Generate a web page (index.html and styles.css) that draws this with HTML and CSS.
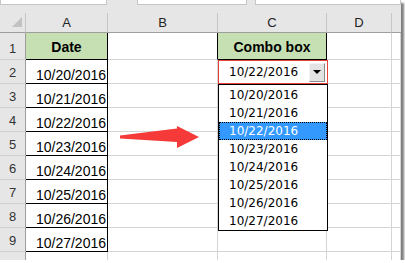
FILE: index.html
```html
<!DOCTYPE html>
<html lang="en">
<head>
  <meta charset="UTF-8">
  <meta name="viewport" content="width=device-width, initial-scale=1.0">
  <title>Combo box from date list</title>

  <!-- Sheet styles -->
  <link rel="stylesheet" href="styles.css">
</head>
<body>
  <div class="window">
    <!-- Name box / formula bar, cut off at the top -->
    <div class="formula-bar">
      <span class="field name-box"></span>
      <span class="field fx-box"></span>
      <span class="field input-box"></span>
    </div>

    <div class="sheet">
      <!-- Column headers -->
      <div class="corner">
        <svg width="26" height="20" viewBox="0 0 26 20"><polygon points="22,4 22,14 12,14" fill="#c2c2c2"/></svg>
      </div>
      <div class="col-head">A</div>
      <div class="col-head">B</div>
      <div class="col-head">C</div>
      <div class="col-head">D</div>
      <div class="col-head last"></div>

      <!-- Row 1 -->
      <div class="row-head">1</div>
      <div class="cell title boxed">Date</div>
      <div class="cell edge-right"></div>
      <div class="cell title boxed">Combo box</div>
      <div class="cell"></div>
      <div class="cell"></div>

      <!-- Rows 2 - 9 -->
      <div class="row-head">2</div>
      <div class="cell date boxed">10/20/2016</div>
      <div class="cell"></div><div class="cell"></div><div class="cell"></div><div class="cell"></div>

      <div class="row-head">3</div>
      <div class="cell date boxed">10/21/2016</div>
      <div class="cell"></div><div class="cell"></div><div class="cell"></div><div class="cell"></div>

      <div class="row-head">4</div>
      <div class="cell date boxed">10/22/2016</div>
      <div class="cell"></div><div class="cell"></div><div class="cell"></div><div class="cell"></div>

      <div class="row-head">5</div>
      <div class="cell date boxed">10/23/2016</div>
      <div class="cell"></div><div class="cell"></div><div class="cell"></div><div class="cell"></div>

      <div class="row-head">6</div>
      <div class="cell date boxed">10/24/2016</div>
      <div class="cell"></div><div class="cell"></div><div class="cell"></div><div class="cell"></div>

      <div class="row-head">7</div>
      <div class="cell date boxed">10/25/2016</div>
      <div class="cell"></div><div class="cell"></div><div class="cell"></div><div class="cell"></div>

      <div class="row-head">8</div>
      <div class="cell date boxed">10/26/2016</div>
      <div class="cell"></div><div class="cell"></div><div class="cell"></div><div class="cell"></div>

      <div class="row-head">9</div>
      <div class="cell date boxed">10/27/2016</div>
      <div class="cell"></div><div class="cell"></div><div class="cell"></div><div class="cell"></div>

      <div class="row-head">10</div>
      <div class="cell"></div><div class="cell"></div><div class="cell"></div><div class="cell"></div><div class="cell"></div>

      <!-- Combo box control over C2 -->
      <div class="combo">
        <span class="combo-value">10/22/2016</span>
        <span class="combo-button"><span class="caret"></span></span>
      </div>

      <!-- Opened list -->
      <ul class="dropdown">
        <li>10/20/2016</li>
        <li>10/21/2016</li>
        <li class="selected">10/22/2016</li>
        <li>10/23/2016</li>
        <li>10/24/2016</li>
        <li>10/25/2016</li>
        <li>10/26/2016</li>
        <li>10/27/2016</li>
      </ul>

      <!-- Red pointer arrow -->
      <svg class="arrow" width="84" height="26" viewBox="0 0 84 26">
        <polygon points="2,11.5 59,4.5 59,2 81,13 59,24 59,18 2,14.5" fill="#f63a3a"/>
      </svg>
    </div>
  </div>
</body>
</html>
```

FILE: styles.css
```css
body {
  margin: 0;
  background: #fff;
  font-family: "Liberation Sans", Arial, sans-serif;
}

.window {
  width: 401px;
  height: 260px;
  overflow: hidden;
  background: #e6e6e6;
  box-shadow: 3px 3px 2px rgba(0, 0, 0, 0.5);
}

.formula-bar {
  display: flex;
  height: 13px;
  background: #e6e6e6;
}

.field {
  height: 4px;
  background: #fff;
  border: 1px solid #c6c6c6;
  border-top: none;
}

.name-box {
  width: 105px;
}

.fx-box {
  width: 108px;
  margin-left: 30px;
}

.input-box {
  flex: 1;
  margin-left: 8px;
}

.sheet {
  position: relative;
  display: grid;
  grid-template-columns: 26px 82px 110px 109px 65px 9px;
  grid-template-rows: 20px 27px repeat(9, 24px);
  background: #fff;
}

.sheet > div {
  box-sizing: border-box;
}

.corner {
  background: #e6e6e6;
  border-right: 1px solid #c6c6c6;
  border-bottom: 1px solid #9e9e9e;
}

.corner svg {
  display: block;
}

.col-head {
  display: flex;
  align-items: center;
  justify-content: center;
  background: #e6e6e6;
  border-right: 1px solid #c6c6c6;
  border-bottom: 1px solid #9e9e9e;
  font-size: 13px;
  color: #222;
}

.col-head.last {
  border-right: none;
}

.row-head {
  display: flex;
  align-items: flex-end;
  justify-content: center;
  padding-bottom: 2px;
  background: #e6e6e6;
  border-right: 1px solid #9e9e9e;
  border-bottom: 1px solid #d0d0d0;
  font-size: 13px;
  line-height: 16px;
  color: #333;
}

.cell {
  display: flex;
  align-items: flex-end;
  border-right: 1px solid #d4d4d4;
  border-bottom: 1px solid #d4d4d4;
  font-size: 14px;
  line-height: 16px;
  color: #000;
}

.cell.boxed,
.cell.edge-right {
  border-right-color: #000;
}

.cell.boxed {
  border-bottom-color: #000;
}

.cell.title {
  justify-content: center;
  padding-bottom: 4px;
  background: #c6e0b4;
  font-weight: bold;
}

.cell.date {
  justify-content: flex-end;
  padding-right: 1px;
}

/* combo box and its list */
.combo {
  position: absolute;
  left: 218px;
  top: 47px;
  width: 110px;
  height: 24px;
  box-sizing: border-box;
  display: flex;
  align-items: center;
  background: #fff;
  border: 1px solid #e8413c;
  font-family: "DejaVu Sans", Tahoma, sans-serif;
  font-size: 12px;
  line-height: 16px;
}

.combo-value {
  flex: 1;
  padding-left: 10px;
}

.combo-button {
  display: flex;
  align-items: center;
  justify-content: center;
  width: 16px;
  height: 19px;
  margin-right: 2px;
  box-sizing: border-box;
  background: #e3e3e3;
  border: 1px solid;
  border-color: #f4f4f4 #8a8a8a #8a8a8a #f4f4f4;
}

.caret {
  width: 0;
  height: 0;
  border-left: 4px solid transparent;
  border-right: 4px solid transparent;
  border-top: 4px solid #000;
}

.dropdown {
  position: absolute;
  left: 218px;
  top: 71px;
  width: 110px;
  margin: 0;
  padding: 1px 0 0;
  box-sizing: border-box;
  list-style: none;
  background: #fff;
  border: 1px solid #000;
  font-family: "DejaVu Sans", Tahoma, sans-serif;
  font-size: 12px;
}

.dropdown li {
  height: 18px;
  line-height: 18px;
  padding-left: 10px;
}

.dropdown li.selected {
  box-sizing: border-box;
  padding-left: 9px;
  line-height: 16px;
  background: #3399ff;
  border: 1px dotted #000;
  color: #fff;
}

.arrow {
  position: absolute;
  left: 118px;
  top: 111px;
}
```
